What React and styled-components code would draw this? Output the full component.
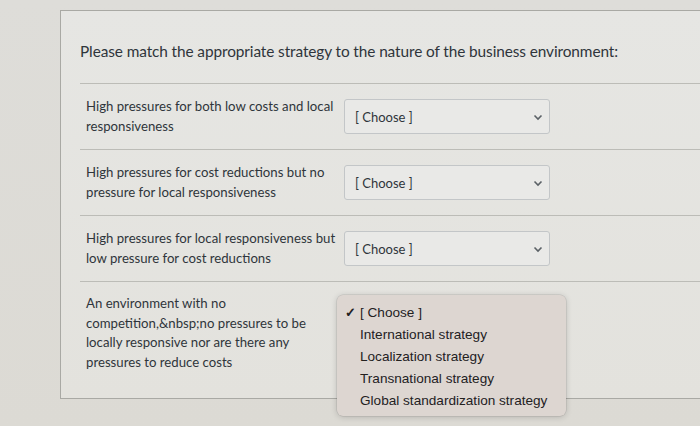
import styled, { createGlobalStyle } from 'styled-components';

const GlobalStyle = createGlobalStyle`
  html, body {
    margin: 0;
    padding: 0;
    background: #dcdbd6;
  }
  #root {
    width: 700px;
    height: 426px;
    overflow: hidden;
  }
`;

const Page = styled.div`
  height: 426px;
  padding: 10px 0 0 60px;
  box-sizing: border-box;
  background: linear-gradient(180deg, #deddd9 0%, #dcdad4 100%);
  font-family: Lato, 'Noto Sans', sans-serif;
  color: #2f353b;
`;

const Panel = styled.div`
  border: 1px solid #a9a9a4;
  border-right: none;
  padding-left: 19px;
  background: linear-gradient(180deg, #e6e6e3 0%, #e3e2dd 100%);
`;

const Header = styled.div`
  height: 72px;
  box-sizing: border-box;
  padding-top: 30px;
  font-size: 15.4px;
  line-height: 20px;
  letter-spacing: -0.1px;
`;

const Row = styled.div`
  display: grid;
  grid-template-columns: 252px 206px;
  column-gap: 6px;
  align-items: ${p => (p.$top ? 'start' : 'center')};
  padding: 12px 0 ${p => p.$bottom || 13}px 6px;
  border-top: 1px solid #bcbcb7;
`;

const Prompt = styled.div`
  font-size: 13.2px;
  line-height: ${p => p.$lh || 20}px;
`;

const SelectWrap = styled.div`
  position: relative;
`;

const SelectBox = styled.div`
  height: 35px;
  box-sizing: border-box;
  border: 1px solid #c3c6c8;
  border-radius: 3px;
  background: #e9e9e7;
  display: flex;
  align-items: center;
  justify-content: space-between;
  padding: 2px 6px 0 10px;
  font-size: 13px;
  visibility: ${p => (p.$covered ? 'hidden' : 'visible')};
`;

const Chevron = () => (
  <svg width="10" height="7" viewBox="0 0 10 7">
    <polyline points="1.5,1.5 5,5 8.5,1.5" fill="none" stroke="#5b6166" strokeWidth="1.6" />
  </svg>
);

const Menu = styled.div`
  position: absolute;
  left: -7px;
  top: 1px;
  width: 229px;
  box-sizing: border-box;
  padding: 6px 0 5px;
  border-radius: 6px;
  background: #ddd6d1;
  box-shadow: 0 1px 6px rgba(0, 0, 0, 0.18), 0 0 0 0.5px rgba(0, 0, 0, 0.12);
  font-family: 'Liberation Sans', Arial, sans-serif;
  font-size: 13.6px;
  color: #23211f;
`;

const MenuItem = styled.div`
  display: flex;
  align-items: center;
  height: 22px;
  padding-left: 8px;
`;

const Check = styled.span`
  width: 15px;
  font-size: 13px;
  font-weight: bold;
`;

const questions = [
  'High pressures for both low costs and local responsiveness',
  'High pressures for cost reductions but no pressure for local responsiveness',
  'High pressures for local responsiveness but low pressure for cost reductions',
];

const options = [
  '[ Choose ]',
  'International strategy',
  'Localization strategy',
  'Transnational strategy',
  'Global standardization strategy',
];

export default function App() {
  return (
    <>
      <GlobalStyle />
      <Page>
        <Panel>
          <Header>Please match the appropriate strategy to the nature of the business environment:</Header>
          {questions.map(q => (
            <Row key={q}>
              <Prompt>{q}</Prompt>
              <SelectBox>
                <span>[ Choose ]</span>
                <Chevron />
              </SelectBox>
            </Row>
          ))}
          <Row $top $bottom={26}>
            <Prompt $lh={19.5}>
              An environment with no competition,&amp;nbsp;no pressures to be locally responsive nor are there any
              pressures to reduce costs
            </Prompt>
            <SelectWrap>
              <SelectBox $covered>
                <span>[ Choose ]</span>
                <Chevron />
              </SelectBox>
              <Menu>
                {options.map((o, i) => (
                  <MenuItem key={o}>
                    <Check>{i === 0 ? '✓' : ''}</Check>
                    {o}
                  </MenuItem>
                ))}
              </Menu>
            </SelectWrap>
          </Row>
        </Panel>
      </Page>
    </>
  );
}
